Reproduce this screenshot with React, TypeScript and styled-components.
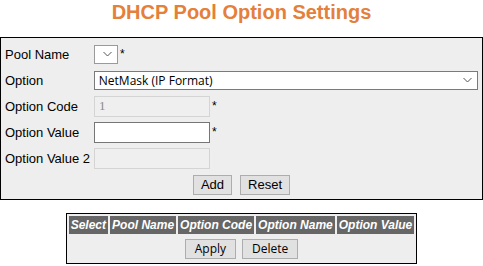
import styled, { createGlobalStyle } from "styled-components";

const GlobalStyle = createGlobalStyle`
  body {
    margin: 0;
    background: #ffffff;
    font-family: "Liberation Sans", Arial, sans-serif;
    font-size: 13px;
    color: #000;
  }
`;

const Title = styled.h1`
  margin: 1px 0 13px;
  font-size: 20px;
  line-height: 23px;
  font-weight: bold;
  text-align: center;
  color: #e4803a;
`;

const Panel = styled.div`
  border: 1px solid #000;
  background: #eeeeee;
  padding: 3px 4px 3px 4px;
`;

const Row = styled.div`
  display: flex;
  align-items: center;
  height: 26px;
`;

const Label = styled.div`
  width: 89px;
  white-space: nowrap;
`;

const FakeSelect = styled.div<{ $wide?: boolean }>`
  box-sizing: border-box;
  display: flex;
  align-items: center;
  justify-content: ${(p) => (p.$wide ? "space-between" : "flex-end")};
  height: 19px;
  width: ${(p) => (p.$wide ? "385px" : "24px")};
  padding: 0 5px 0 4px;
  border: 1px solid ${(p) => (p.$wide ? "#7a7a7a" : "#9a9a9a")};
  background: #fff;
  font-family: "Open Sans", "Noto Sans", sans-serif;
  font-size: 12px;
`;

const TextInput = styled.input<{ $enabled?: boolean }>`
  box-sizing: border-box;
  width: 116px;
  height: 21px;
  margin: 0;
  padding: 0 4px;
  border: 1px solid ${(p) => (p.$enabled ? "#767676" : "#d4d4d4")};
  background: ${(p) => (p.$enabled ? "#fff" : "#efefef")};
  font-family: "Liberation Serif", serif;
  font-size: 13px;
  color: #8a8a8a;
  outline: none;
`;

const Star = styled.span`
  align-self: flex-start;
  margin-top: 6px;
  padding-left: 2px;
  font-size: 12px;
`;

const ButtonBar = styled.div<{ $gap: number }>`
  display: flex;
  justify-content: center;
  gap: ${(p) => p.$gap}px;
  padding: ${(p) => (p.$gap > 7 ? "4px 0 1px" : "2px 0 1px")};
`;

const Btn = styled.button<{ $ui?: boolean }>`
  height: 20px;
  margin: 0;
  padding: 0 ${(p) => (p.$ui ? "9px" : "7px")};
  border: 1px solid #adadad;
  background: #e1e1e1;
  font-family: ${(p) =>
    p.$ui ? `"Open Sans", "Noto Sans", sans-serif` : `"Liberation Sans", Arial, sans-serif`};
  font-size: ${(p) => (p.$ui ? "12px" : "13px")};
  color: #000;
  line-height: 18px;
`;

const TableWrap = styled.div`
  display: flex;
  justify-content: center;
  margin-top: 13px;
`;

const ResultTable = styled.table`
  border: 1px solid #000;
  background: #eeeeee;
  border-spacing: 2px;
`;

const Th = styled.th`
  background: #666666;
  color: #fff;
  font-size: 12px;
  font-weight: bold;
  font-style: italic;
  padding: 2px 2px;
  white-space: nowrap;
`;

const Td = styled.td`
  padding: 1px;
`;

const Chevron = () => (
  <svg width="9" height="6" viewBox="0 0 9 6">
    <path d="M0.5 1 L4.5 5 L8.5 1" fill="none" stroke="#555" strokeWidth="1" />
  </svg>
);

const columns = ["Select", "Pool Name", "Option Code", "Option Name", "Option Value"];

export default function App() {
  return (
    <>
      <GlobalStyle />
      <Title>DHCP Pool Option Settings</Title>
      <Panel>
        <Row>
          <Label>Pool Name</Label>
          <FakeSelect>
            <Chevron />
          </FakeSelect>
          <Star>*</Star>
        </Row>
        <Row>
          <Label>Option</Label>
          <FakeSelect $wide>
            <span>NetMask (IP Format)</span>
            <Chevron />
          </FakeSelect>
        </Row>
        <Row>
          <Label>Option Code</Label>
          <TextInput disabled defaultValue="1" />
          <Star>*</Star>
        </Row>
        <Row>
          <Label>Option Value</Label>
          <TextInput $enabled />
          <Star>*</Star>
        </Row>
        <Row>
          <Label>Option Value 2</Label>
          <TextInput disabled />
        </Row>
        <ButtonBar $gap={8}>
          <Btn>Add</Btn>
          <Btn>Reset</Btn>
        </ButtonBar>
      </Panel>
      <TableWrap>
        <ResultTable>
          <thead>
            <tr>
              {columns.map((c) => (
                <Th key={c}>{c}</Th>
              ))}
            </tr>
          </thead>
          <tbody>
            <tr>
              <Td colSpan={5}>
                <ButtonBar $gap={6}>
                  <Btn $ui>Apply</Btn>
                  <Btn $ui>Delete</Btn>
                </ButtonBar>
              </Td>
            </tr>
          </tbody>
        </ResultTable>
      </TableWrap>
    </>
  );
}
